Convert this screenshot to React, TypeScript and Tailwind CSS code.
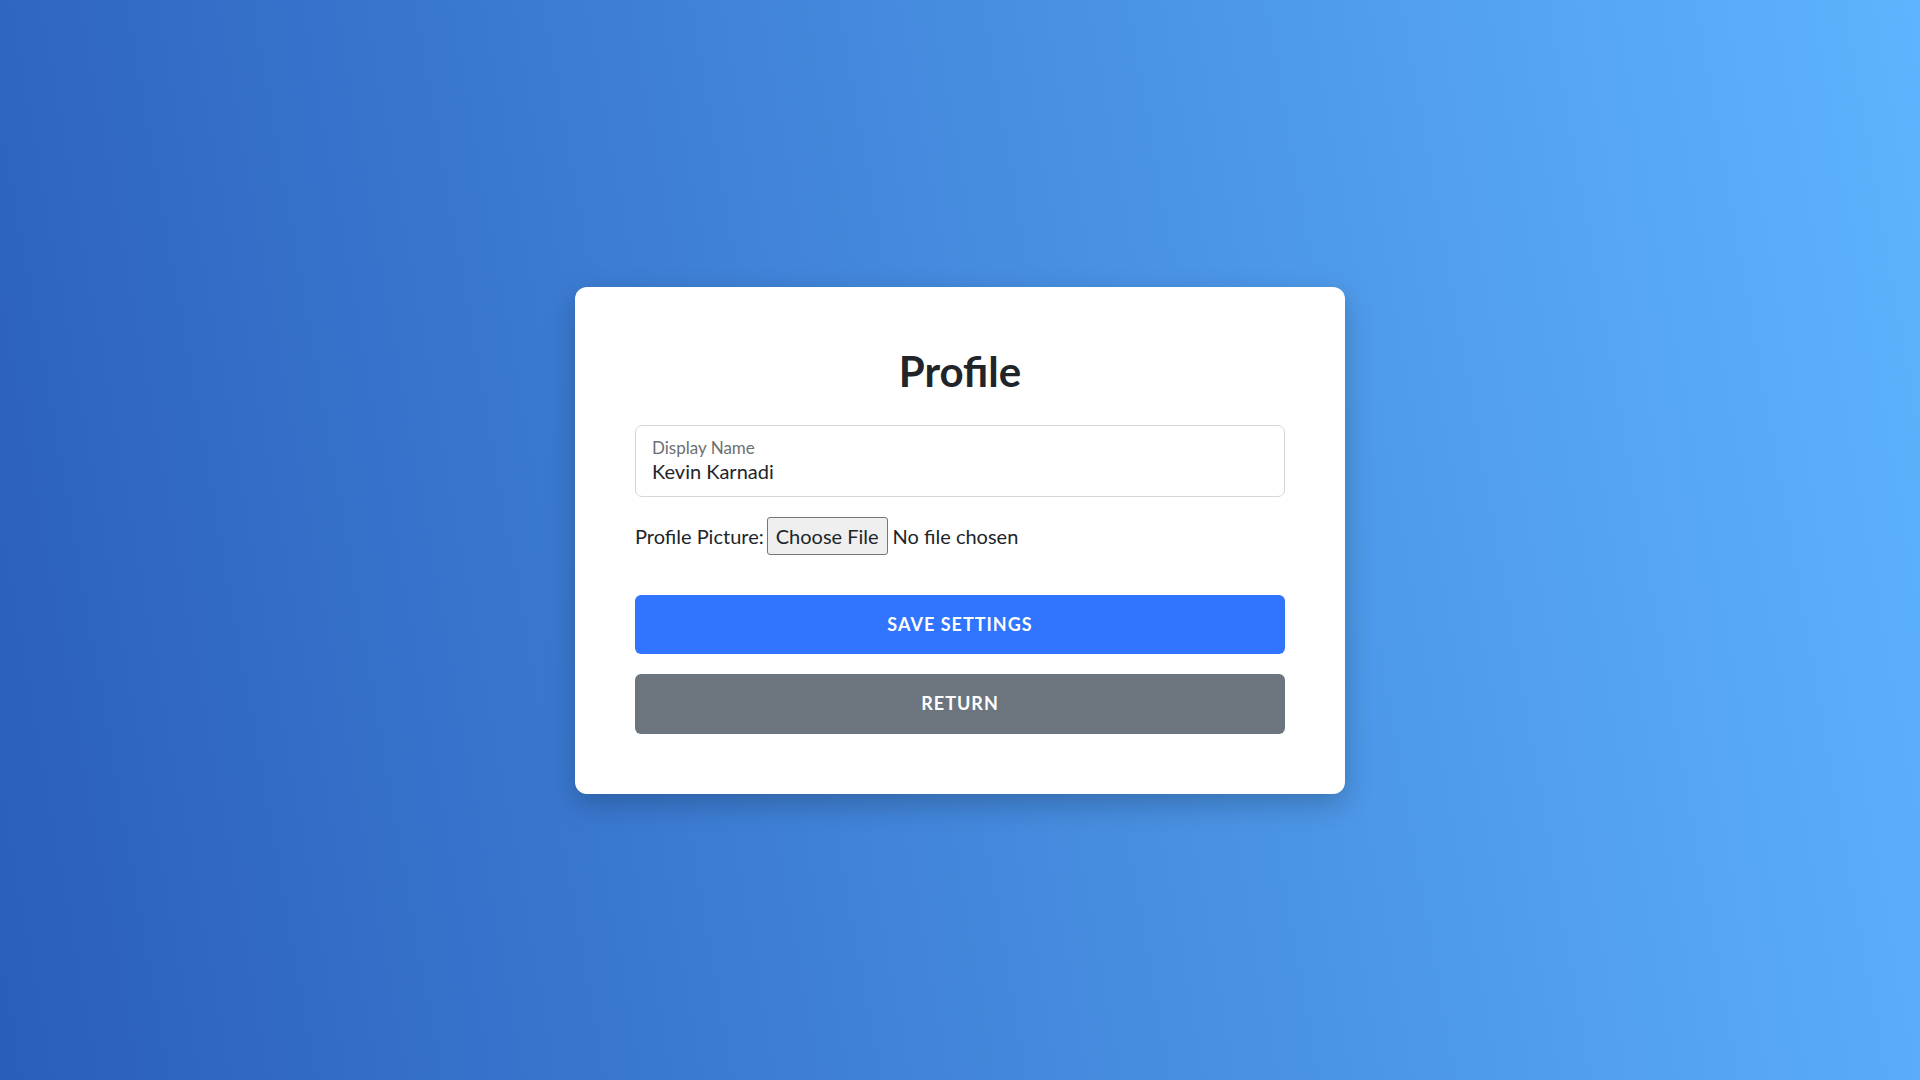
import { useState } from "react";

export default function App() {
  const [name, setName] = useState("Kevin Karnadi");

  return (
    <main className="flex min-h-screen w-full items-center justify-center bg-[linear-gradient(80deg,#2a5ebb,#5eb4fe)] font-['Lato',sans-serif] text-[#212529]">
      <div className="w-[770px] rounded-[12px] bg-white p-[60px] shadow-[0_10px_28px_rgba(0,0,0,0.22)]">
        <h2 className="mb-[30px] text-center text-[42px] font-bold leading-[48px]">
          Profile
        </h2>

        <div className="flex h-[72px] flex-col rounded-[7px] border border-[#d4d7db] px-[16px] pt-[12px]">
          <label
            htmlFor="displayName"
            className="text-[17px] leading-[20px] text-[#6c6f73]"
          >
            Display Name
          </label>
          <input
            id="displayName"
            value={name}
            onChange={(e) => setName(e.target.value)}
            className="mt-[1px] w-full bg-transparent text-[20px] leading-[24px] outline-none"
          />
        </div>

        <div className="mt-[20px] flex h-[38px] items-center text-[20px]">
          <label htmlFor="avatar">Profile Picture:</label>
          <input
            id="avatar"
            type="file"
            accept="image/*"
            className="ml-[3px] text-[20px] file:mr-[5px] file:h-[38px] file:rounded-[3px] file:border file:border-[#767676] file:bg-[#efefef] file:px-[8px] file:text-[#212529]"
          />
        </div>

        <button className="mt-[40px] h-[59px] w-full rounded-[6px] bg-[#3174fe] text-[18px] font-bold tracking-[1px] text-white uppercase">
          Save Settings
        </button>
        <button className="mt-[20px] h-[60px] w-full rounded-[6px] bg-[#6c757d] text-[18px] font-bold tracking-[1px] text-white uppercase">
          Return
        </button>
      </div>
    </main>
  );
}
